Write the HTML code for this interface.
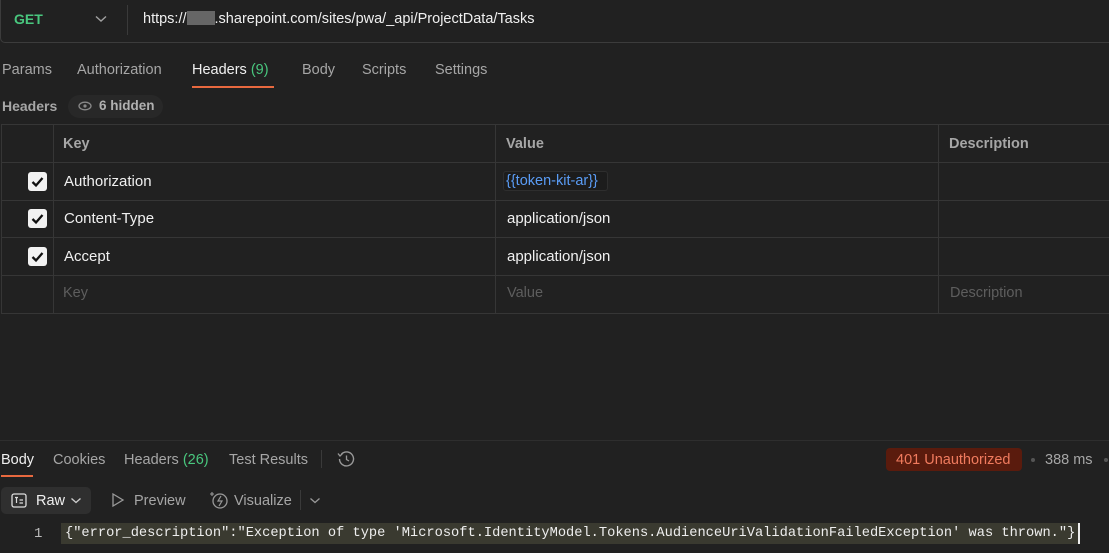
<!DOCTYPE html>
<html><head><meta charset="utf-8"><style>
*{box-sizing:border-box;margin:0;padding:0}
body{width:1109px;height:553px;background:#212121;font-family:"Liberation Sans",sans-serif;color:#a6a6a6;position:relative;overflow:hidden;font-size:14px}
.a{position:absolute;white-space:nowrap}
.url{position:absolute;left:0;top:-4px;width:1120px;height:47px;border:1px solid #3c3c3c;border-radius:0 0 5px 5px}
.tbl{position:absolute;left:1px;top:124px;width:1120px;height:190px;border-top:1px solid #363636;border-left:1px solid #363636}
.h{position:absolute;left:0;width:1120px;height:1px;background:#363636}
.v{position:absolute;top:0;width:1px;height:189px;background:#363636}
.cb{position:absolute;left:28px;width:19px;height:19px;background:#f2f2f2;border-radius:3px}
.w{color:#f0f0f0}
</style></head><body>
<div class="url"></div>
<div class="a" style="left:14px;top:11px;color:#49c77e;font-weight:bold;font-size:14px">GET</div>
<svg class="a" style="left:95px;top:15px" width="12" height="8"><path d="M1 1.5L6 6L11 1.5" stroke="#a0a0a0" stroke-width="1.4" fill="none"/></svg>
<div class="a" style="left:127px;top:5px;width:1px;height:30px;background:#3a3a3a"></div>
<div class="a w" style="left:143px;top:11px;font-size:14.5px">https://<span style="display:inline-block;width:28px;height:14px;background:#666;vertical-align:-2px"></span>.sharepoint.com/sites/pwa/_api/ProjectData/Tasks</div>

<div class="a" style="left:2px;top:62px;font-size:14.5px">Params</div>
<div class="a" style="left:77px;top:62px;font-size:14.5px">Authorization</div>
<div class="a w" style="left:192px;top:62px;font-size:14.5px">Headers <span style="color:#49c77e">(9)</span></div>
<div class="a" style="left:192px;top:86px;width:82px;height:2px;background:#e8693f"></div>
<div class="a" style="left:302px;top:62px;font-size:14.5px">Body</div>
<div class="a" style="left:362px;top:62px;font-size:14.5px">Scripts</div>
<div class="a" style="left:435px;top:62px;font-size:14.5px">Settings</div>

<div class="a" style="left:2px;top:98px;font-weight:bold;font-size:14px">Headers</div>
<div class="a" style="left:68px;top:95px;width:95px;height:23px;background:#282828;border-radius:12px"></div>
<svg class="a" style="left:78px;top:101px" width="14" height="10"><ellipse cx="7" cy="5" rx="6" ry="3.8" fill="none" stroke="#888" stroke-width="1.3"/><circle cx="7" cy="5" r="1.6" fill="#888"/></svg>
<div class="a" style="left:99px;top:98px;font-weight:bold;font-size:13.5px;color:#b0b0b0">6 hidden</div>

<div class="tbl">
<div class="h" style="top:37px"></div><div class="h" style="top:75px"></div><div class="h" style="top:112px"></div><div class="h" style="top:150px"></div><div class="h" style="top:188px"></div>
<div class="v" style="left:51px"></div><div class="v" style="left:493px"></div><div class="v" style="left:936px"></div>
</div>
<div class="a" style="left:63px;top:136px;font-weight:bold;font-size:14.5px">Key</div>
<div class="a" style="left:506px;top:136px;font-weight:bold;font-size:14.5px">Value</div>
<div class="a" style="left:949px;top:136px;font-weight:bold;font-size:14.5px">Description</div>

<div class="cb" style="top:172px"></div><div class="cb" style="top:209px"></div><div class="cb" style="top:247px"></div>
<svg class="a" style="left:28px;top:172px" width="19" height="100"><g stroke="#111" stroke-width="2.3" fill="none"><path d="M4.5 10L8 13.5L14.5 6"/><path d="M4.5 47L8 50.5L14.5 43"/><path d="M4.5 85L8 88.5L14.5 81"/></g></svg>
<div class="a w" style="left:64px;top:173px;font-size:15px">Authorization</div>
<div class="a w" style="left:64px;top:210px;font-size:15px">Content-Type</div>
<div class="a w" style="left:64px;top:248px;font-size:15px">Accept</div>
<div class="a" style="left:63px;top:285px;font-size:14.5px;color:#5e5e5e">Key</div>
<div class="a" style="left:503px;top:171px;width:105px;height:20px;background:#1c1c1c;border:1px solid #2e2e2e;border-radius:3px"></div>
<div class="a" style="left:506px;top:173px;font-size:14.5px;color:#5a9cf5">{{token-kit-ar}}</div>
<div class="a w" style="left:507px;top:210px;font-size:15px">application/json</div>
<div class="a w" style="left:507px;top:248px;font-size:15px">application/json</div>
<div class="a" style="left:507px;top:285px;font-size:14.5px;color:#5e5e5e">Value</div>
<div class="a" style="left:950px;top:285px;font-size:14.5px;color:#5e5e5e">Description</div>

<div class="a" style="left:0;top:440px;width:1109px;height:1px;background:#2e2e2e"></div>
<div class="a w" style="left:1px;top:452px;font-size:14.5px">Body</div>
<div class="a" style="left:1px;top:475px;width:32px;height:2px;background:#e8693f"></div>
<div class="a" style="left:53px;top:452px;font-size:14.5px">Cookies</div>
<div class="a" style="left:124px;top:452px;font-size:14.5px">Headers <span style="color:#49c77e">(26)</span></div>
<div class="a" style="left:229px;top:452px;font-size:14.5px">Test Results</div>
<div class="a" style="left:321px;top:450px;width:1px;height:18px;background:#3a3a3a"></div>
<svg class="a" style="left:336px;top:450px" width="20" height="18"><path d="M3.5 9A7 7 0 1 0 5.5 4" stroke="#999" stroke-width="1.4" fill="none"/><path d="M2 3.5L4 6L6.5 3.5" stroke="#999" stroke-width="1.3" fill="none"/><path d="M10.5 5.5V9.5L13 11" stroke="#999" stroke-width="1.3" fill="none"/></svg>
<div class="a" style="left:886px;top:448px;width:136px;height:23px;background:#5a1b0d;border-radius:4px"></div>
<div class="a" style="left:896px;top:452px;font-size:14.5px;color:#f07b5e">401 Unauthorized</div>
<div class="a" style="left:1031px;top:458px;width:4px;height:4px;border-radius:2px;background:#555"></div>
<div class="a" style="left:1045px;top:452px;font-size:14.5px">388 ms</div>
<div class="a" style="left:1104px;top:458px;width:4px;height:4px;border-radius:2px;background:#555"></div>

<div class="a" style="left:1px;top:487px;width:90px;height:27px;background:#2f2f2f;border-radius:5px"></div>
<svg class="a" style="left:11px;top:493px" width="16" height="15"><rect x="1" y="1" width="14" height="13" rx="2" fill="none" stroke="#ddd" stroke-width="1.3"/><path d="M4 4.5H7M5.5 4.5V10M8.5 7H12M8.5 10H12" stroke="#ddd" stroke-width="1.2"/></svg>
<div class="a w" style="left:36px;top:493px;font-size:14.5px">Raw</div>
<svg class="a" style="left:70px;top:497px" width="12" height="8"><path d="M1.5 1.5L6 5.5L10.5 1.5" stroke="#ccc" stroke-width="1.4" fill="none"/></svg>
<svg class="a" style="left:111px;top:492px" width="14" height="16"><path d="M2 2L12 8L2 14Z" stroke="#999" stroke-width="1.3" fill="none"/></svg>
<div class="a" style="left:134px;top:493px;font-size:14.5px">Preview</div>
<svg class="a" style="left:208px;top:490px" width="22" height="20"><circle cx="12" cy="11" r="7" stroke="#999" stroke-width="1.3" fill="none"/><path d="M13 6L10 11H14L11 16" stroke="#999" stroke-width="1.2" fill="none"/><path d="M4 2V6M2 4H6" stroke="#999" stroke-width="1.1"/></svg>
<div class="a" style="left:234px;top:493px;font-size:14.5px">Visualize</div>
<div class="a" style="left:300px;top:490px;width:1px;height:20px;background:#3a3a3a"></div>
<svg class="a" style="left:309px;top:497px" width="12" height="8"><path d="M1.5 1.5L6 5.5L10.5 1.5" stroke="#999" stroke-width="1.3" fill="none"/></svg>

<div class="a" style="left:34px;top:526px;font-family:'Liberation Mono',monospace;font-size:14px;color:#bbb">1</div>
<div class="a" style="left:61px;top:523px;width:1018px;height:21px;background:#3a3a30"></div>
<div class="a" style="left:65px;top:526px;font-family:'Liberation Mono',monospace;font-size:13.7px;color:#eee">{"error_description":"Exception of type 'Microsoft.IdentityModel.Tokens.AudienceUriValidationFailedException' was thrown."}</div>
<div class="a" style="left:1078px;top:523px;width:2px;height:21px;background:#eee"></div>
</body></html>
